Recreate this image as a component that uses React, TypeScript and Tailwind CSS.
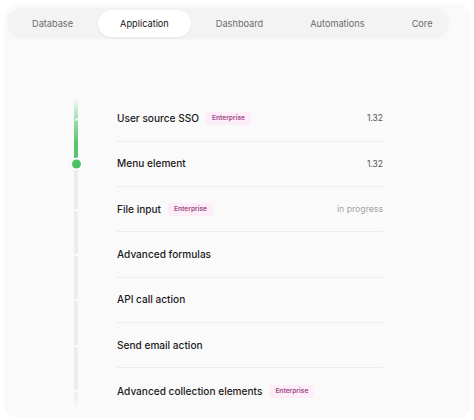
import React from "react";

type Row = {
  title: string;
  enterprise?: boolean;
  meta?: string;
  muted?: boolean;
};

const tabs = ["Database", "Application", "Dashboard", "Automations", "Core"];

const rows: Row[] = [
  { title: "User source SSO", enterprise: true, meta: "1.32" },
  { title: "Menu element", meta: "1.32" },
  { title: "File input", enterprise: true, meta: "in progress", muted: true },
  { title: "Advanced formulas" },
  { title: "API call action" },
  { title: "Send email action" },
  { title: "Advanced collection elements", enterprise: true },
];

function Rail({ index }: { index: number }) {
  // first row fades in green, second row holds the current dot
  if (index === 0) {
    return (
      <div className="relative flex h-full w-full justify-center">
        <div className="mt-[1px] h-full w-[4px] bg-gradient-to-b from-[#57c46f00] via-[#9bdcab] to-[#57c46f]" />
        <div className="absolute top-[21px] h-[3px] w-[3px] rounded-full bg-white/70" />
      </div>
    );
  }
  if (index === 1) {
    return (
      <div className="relative flex h-full w-full flex-col items-center">
        <div className="h-1/2 w-[4px] bg-[#57c46f]" />
        <div className="h-1/2 w-[4px] bg-[#ececec]" />
        <div className="absolute top-1/2 h-[13px] w-[13px] -translate-y-1/2 rounded-full bg-white p-[2px] shadow-[0_0_3px_rgba(0,0,0,0.08)]">
          <div className="h-full w-full rounded-full bg-[#4cc264]" />
        </div>
      </div>
    );
  }
  const last = index === rows.length - 1;
  return (
    <div className="relative flex h-full w-full justify-center">
      <div
        className={`w-[4px] ${
          last
            ? "mb-[4px] bg-gradient-to-b from-[#ececec] via-[#ececec] to-[#ececec00]"
            : "bg-[#ececec]"
        }`}
      />
      <div className="absolute top-1/2 h-[3px] w-[3px] -translate-y-1/2 rounded-full bg-white" />
    </div>
  );
}

export default function App() {
  return (
    <div
      className="h-[420px] w-[474px] overflow-hidden bg-white p-[4px] pr-[3px] pb-[2px]"
      style={{ fontFamily: "Inter, 'Noto Sans', sans-serif" }}
    >
      <div className="h-full w-full rounded-[14px] bg-[#fafafa]">
        <div className="pl-[3px] pt-[4px]">
          <div className="flex h-[31px] w-[440px] items-center gap-[3px] overflow-hidden rounded-full bg-[#f3f3f3] pl-[3px] shadow-[2px_0_3px_rgba(0,0,0,0.03)]">
            {tabs.map((tab, i) => (
              <div
                key={tab}
                className={`flex h-[27px] shrink-0 items-center rounded-full px-[22px] text-[9.2px] ${
                  i === 1
                    ? "bg-white text-[#151515] shadow-[0_1px_3px_rgba(0,0,0,0.06)]"
                    : "text-[#6b6b6b]"
                }`}
              >
                {tab}
              </div>
            ))}
          </div>
        </div>

        <div className="mt-[57.5px] flex flex-col">
          {rows.map((row, i) => (
            <div key={row.title} className="flex h-[45.33px]">
              <div className="w-[113px] shrink-0 pl-[62px]">
                <div className="h-full w-[20px]">
                  <Rail index={i} />
                </div>
              </div>
              <div
                className={`flex w-[266px] items-center justify-between ${
                  i < rows.length - 1 ? "border-b border-[#ececec]" : ""
                }`}
              >
                <div className="flex items-center gap-[7px]">
                  <span className="text-[10.1px] font-medium text-[#1a1a1a]">
                    {row.title}
                  </span>
                  {row.enterprise && (
                    <span className="rounded-[3px] bg-[#fcedf8] px-[6px] py-[3px] text-[6.6px] leading-[7px] font-semibold text-[#a04a86]">
                      Enterprise
                    </span>
                  )}
                </div>
                {row.meta && (
                  <span
                    className={`${
                      row.muted
                        ? "text-[8.7px] text-[#a3a3a3]"
                        : "text-[8.5px] text-[#555]"
                    }`}
                  >
                    {row.meta}
                  </span>
                )}
              </div>
            </div>
          ))}
        </div>
      </div>
    </div>
  );
}
